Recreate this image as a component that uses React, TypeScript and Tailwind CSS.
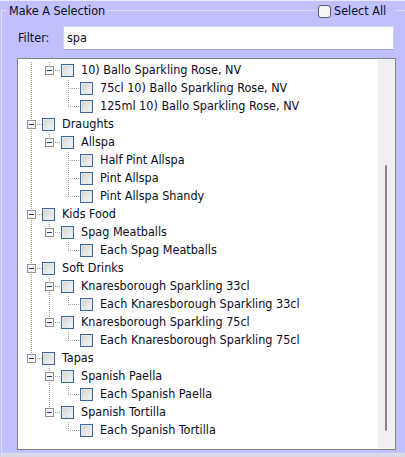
import React from "react";

type Node = { label: string | null; children?: Node[] };

// A null label marks a node whose own row is scrolled above the visible area.
const tree: Node[] = [
  {
    label: null,
    children: [
      {
        label: "10) Ballo Sparkling Rose, NV",
        children: [
          { label: "75cl 10) Ballo Sparkling Rose, NV" },
          { label: "125ml 10) Ballo Sparkling Rose, NV" },
        ],
      },
    ],
  },
  {
    label: "Draughts",
    children: [
      {
        label: "Allspa",
        children: [
          { label: "Half Pint Allspa" },
          { label: "Pint Allspa" },
          { label: "Pint Allspa Shandy" },
        ],
      },
    ],
  },
  {
    label: "Kids Food",
    children: [
      {
        label: "Spag Meatballs",
        children: [{ label: "Each Spag Meatballs" }],
      },
    ],
  },
  {
    label: "Soft Drinks",
    children: [
      {
        label: "Knaresborough Sparkling 33cl",
        children: [{ label: "Each Knaresborough Sparkling 33cl" }],
      },
      {
        label: "Knaresborough Sparkling 75cl",
        children: [{ label: "Each Knaresborough Sparkling 75cl" }],
      },
    ],
  },
  {
    label: "Tapas",
    children: [
      {
        label: "Spanish Paella",
        children: [{ label: "Each Spanish Paella" }],
      },
      {
        label: "Spanish Tortilla",
        children: [{ label: "Each Spanish Tortilla" }],
      },
    ],
  },
];

type Row = {
  label: string;
  level: number;
  branch: boolean;
  last: boolean;
  rails: boolean[];
};

function flatten(nodes: Node[], level: number, rails: boolean[], out: Row[]): Row[] {
  nodes.forEach((n, i) => {
    const last = i === nodes.length - 1;
    if (n.label !== null) {
      out.push({ label: n.label, level, branch: !!n.children?.length, last, rails });
    }
    if (n.children) flatten(n.children, level + 1, [...rails, !last], out);
  });
  return out;
}

const rows = flatten(tree, 0, [], []);

const ROW_H = 18;
const MID = 9;
const LINE_X = [13, 31, 50];
const DOT = "#a3a3a3";

function vDots(x: number, y0: number, y1: number, key: string) {
  const out: React.ReactElement[] = [];
  for (let y = y0; y <= y1; y++) {
    if (y % 2 === 1) out.push(<rect key={`${key}-${y}`} x={x} y={y} width={1} height={1} fill={DOT} />);
  }
  return out;
}

function hDots(x0: number, x1: number, y: number, start: number, key: string) {
  const out: React.ReactElement[] = [];
  for (let x = x0; x <= x1; x++) {
    if ((x - start) % 2 === 0) out.push(<rect key={`${key}-${x}`} x={x} y={y} width={1} height={1} fill={DOT} />);
  }
  return out;
}

function Gutter({ row }: { row: Row }) {
  const w = 24 + 19 * row.level;
  const lx = LINE_X[row.level];
  const parts: React.ReactElement[] = [];
  row.rails.forEach((on, k) => {
    if (on) parts.push(...vDots(LINE_X[k], 0, ROW_H - 1, `r${k}`));
  });
  if (row.branch) {
    parts.push(...vDots(lx, 0, MID - 5, "up"));
    if (!row.last) parts.push(...vDots(lx, MID + 5, ROW_H - 1, "dn"));
    parts.push(...hDots(lx + 5, w - 1, MID, lx, "h"));
    parts.push(
      <rect key="box" x={lx - 3.5} y={MID - 3.5} width={8} height={8} fill="#f7f7f7" stroke="#939393" />,
      <rect key="minus" x={lx - 2} y={MID} width={5} height={1} fill="#23416b" />
    );
  } else {
    parts.push(...vDots(lx, 0, row.last ? MID : ROW_H - 1, "v"));
    parts.push(...hDots(lx + 1, w - 1, MID, lx, "h"));
  }
  return (
    <svg width={w} height={ROW_H} className="shrink-0" shapeRendering="crispEdges">
      {parts}
    </svg>
  );
}

function TreeCheck() {
  return (
    <span className="mt-[3px] block h-[13px] w-[13px] shrink-0 border border-[#3a6aa0] bg-linear-to-br from-[#d2d2d2] to-[#f8f8f8] shadow-[inset_0_0_0_1px_#e6e6e6]" />
  );
}

export default function App() {
  return (
    <div className="h-[457px] w-[405px] overflow-hidden border-t border-[#e8e8f4] bg-[#c0c0ff] font-['DejaVu_Sans_Condensed','Liberation_Sans',sans-serif] text-[12.5px] text-[#0c0c1c]">
      <div className="relative ml-[1px] mt-[9px] h-[444px] w-[430px] border border-[#dedeec] pl-[15px] pt-[15px]">
        <div className="absolute left-[5px] top-[-8px] bg-[#c0c0ff] px-[2px] leading-[16px]">
          Make A Selection
        </div>
        <label className="absolute left-[314px] top-[-8px] flex items-center bg-[#c0c0ff] pl-[2px] pr-[9px] leading-[16px]">
          <span className="block h-[13px] w-[13px] rounded-[3px] border border-[#5c5c5c] bg-[#f5f5f5]" />
          <span className="ml-[3px]">Select All</span>
        </label>

        <div className="flex h-[24px] items-center">
          <span className="w-[46px] pl-[1px]">Filter:</span>
          <div className="flex h-[24px] w-[331px] items-center border border-[#d2d2e0] border-b-[#a8a8bc] bg-white pl-[3px]">
            spa
          </div>
        </div>

        <div className="mt-[8px] flex h-[392px] w-[379px] border border-[#828282] bg-white">
          <div className="flex-1 pt-[2px]">
            {rows.map((row, i) => (
              <div key={i} className="flex h-[18px] items-start whitespace-nowrap leading-[18px]">
                <Gutter row={row} />
                <TreeCheck />
                <span className="ml-[7px]">{row.label}</span>
              </div>
            ))}
          </div>
          <div className="w-[17px] bg-[#f0f0f0]">
            <div className="ml-[7px] mt-[106px] h-[266px] w-[2px] rounded-full bg-[#878787]" />
          </div>
        </div>
      </div>
      <div className="h-[3px] bg-[#d8d8e4]" />
    </div>
  );
}
